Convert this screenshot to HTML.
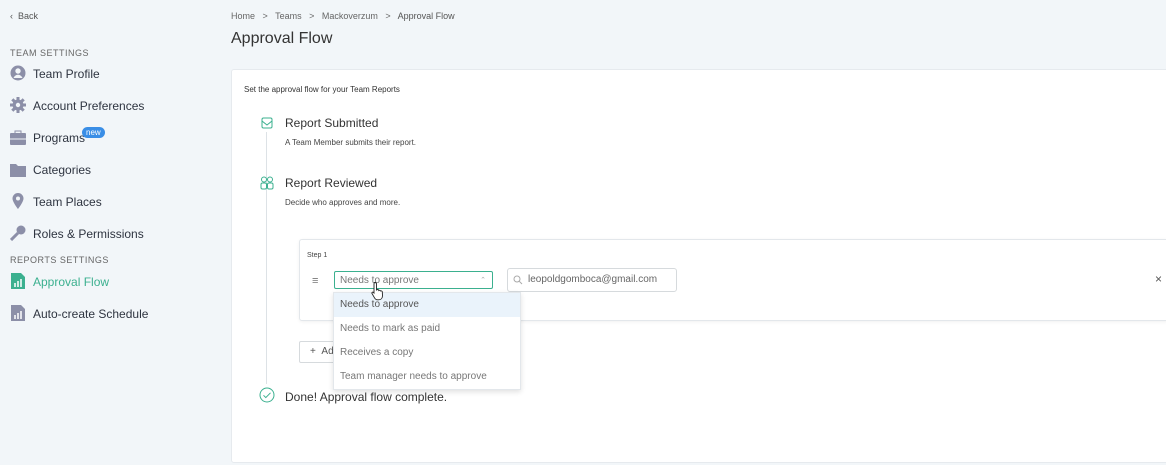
<!DOCTYPE html>
<html><head><style>
*{margin:0;padding:0;box-sizing:border-box}
body{width:1166px;height:465px;background:#f2f6f9;font-family:"Liberation Sans",sans-serif;color:#333;position:relative;overflow:hidden}
.a{position:absolute;white-space:nowrap}
.nav{font-size:12px;color:#2e3440}
.ic{position:absolute;left:10px;width:16px;height:16px}
.sec{font-size:9px;color:#666;letter-spacing:.5px}
.card{position:absolute;left:231px;top:69px;width:940px;height:394px;background:#fff;border:1px solid #e6eaee;border-radius:3px}
.step{position:absolute;left:299px;top:239px;width:870px;height:82px;background:#fff;border:1px solid #e3e7eb;border-radius:3px;box-shadow:0 1px 3px rgba(0,0,0,.06)}
.dd{position:absolute;left:333px;top:292px;width:188px;height:98px;background:#fff;border:1px solid #e3e7eb;box-shadow:0 2px 5px rgba(0,0,0,.12);font-size:10px;color:#777}
.dd div{height:24px;line-height:24px;padding-left:6px}
</style></head><body>
<div class="a" style="left:10px;top:11px;font-size:9px;color:#555">&lsaquo;&nbsp; Back</div>
<div class="a sec" style="left:10px;top:48px">TEAM SETTINGS</div>
<svg class="ic" style="top:65px" viewBox="0 0 16 16"><circle cx="8" cy="8" r="7.5" fill="#8c8fa8"/><circle cx="8" cy="6" r="2.7" fill="#f2f6f9"/><path d="M3.5 13c1-2.5 3-3.3 4.5-3.3s3.5.8 4.5 3.3" fill="#f2f6f9"/></svg>
<div class="a nav" style="left:33px;top:67px">Team Profile</div>
<svg class="ic" style="top:97px" viewBox="0 0 16 16"><circle cx="8" cy="8" r="5.5" fill="#8c8fa8"/><g stroke="#8c8fa8" stroke-width="3"><path d="M8 0v16M0 8h16M2.3 2.3l11.4 11.4M13.7 2.3L2.3 13.7"/></g><circle cx="8" cy="8" r="2.2" fill="#f2f6f9"/></svg>
<div class="a nav" style="left:33px;top:99px">Account Preferences</div>
<svg class="ic" style="top:130px" viewBox="0 0 16 16"><rect x="0" y="3" width="16" height="12" rx="1" fill="#8c8fa8"/><rect x="5" y="1" width="6" height="3" fill="none" stroke="#8c8fa8"/><path d="M0 9h16" stroke="#f2f6f9"/></svg>
<div class="a nav" style="left:33px;top:131px">Programs</div>
<div class="a" style="left:82px;top:127px;background:#3a8ee6;color:#fff;font-size:8px;border-radius:7px;padding:1px 4px">new</div>
<svg class="ic" style="top:162px" viewBox="0 0 16 16"><path d="M0 2h6l2 2h8v11H0z" fill="#8c8fa8"/></svg>
<div class="a nav" style="left:33px;top:163px">Categories</div>
<svg class="ic" style="top:193px" viewBox="0 0 16 16"><path d="M8 0a5.5 5.5 0 0 1 5.5 5.5C13.5 9 8 16 8 16S2.5 9 2.5 5.5A5.5 5.5 0 0 1 8 0z" fill="#8c8fa8"/><circle cx="8" cy="5.5" r="2" fill="#f2f6f9"/></svg>
<div class="a nav" style="left:33px;top:195px">Team Places</div>
<svg class="ic" style="top:225px" viewBox="0 0 16 16"><circle cx="11" cy="5" r="4.5" fill="#8c8fa8"/><path d="M8 8L1 15" stroke="#8c8fa8" stroke-width="3"/></svg>
<div class="a nav" style="left:33px;top:227px">Roles &amp; Permissions</div>
<div class="a sec" style="left:10px;top:255px">REPORTS SETTINGS</div>
<svg class="ic" style="top:273px" viewBox="0 0 16 16"><path d="M1 0h10l4 4v12H1z" fill="#3bb08f"/><path d="M5 14V10M8 14V8M11 14V6" stroke="#fff" stroke-width="1.5"/></svg>
<div class="a nav" style="left:33px;top:275px;color:#3bb08f">Approval Flow</div>
<svg class="ic" style="top:305px" viewBox="0 0 16 16"><path d="M1 0h10l4 4v12H1z" fill="#8c8fa8"/><path d="M5 14V10M8 14V8M11 14V6" stroke="#fff" stroke-width="1.5"/></svg>
<div class="a nav" style="left:33px;top:307px">Auto-create Schedule</div>

<div class="a" style="left:231px;top:11px;font-size:9px;color:#666">Home &nbsp;&nbsp;&gt;&nbsp;&nbsp; Teams &nbsp;&nbsp;&gt;&nbsp;&nbsp; Mackoverzum &nbsp;&nbsp;&gt;&nbsp;&nbsp; <span style="color:#555">Approval Flow</span></div>
<div class="a" style="left:231px;top:30px;font-size:16px;color:#333">Approval Flow</div>
<div class="card"></div>
<div class="a" style="left:244px;top:85px;font-size:8px;color:#333">Set the approval flow for your Team Reports</div>
<div class="a" style="left:266px;top:132px;width:1px;height:252px;background:#dde2e6"></div>
<svg class="a" style="left:261px;top:117px" width="12" height="12" viewBox="0 0 12 12"><rect x="1" y="1" width="10" height="10" rx="1.5" fill="#fff" stroke="#3bb08f"/><path d="M1 4l5 4 5-4" fill="none" stroke="#3bb08f"/></svg>
<div class="a" style="left:285px;top:116px;font-size:12px;color:#333">Report Submitted</div>
<div class="a" style="left:285px;top:138px;font-size:8px;color:#444">A Team Member submits their report.</div>
<svg class="a" style="left:260px;top:176px" width="14" height="14" viewBox="0 0 14 14" fill="#fff" stroke="#3bb08f"><circle cx="4" cy="3.5" r="2.5"/><circle cx="10" cy="3.5" r="2.5"/><rect x="1" y="7" width="5.5" height="6" rx="1.5"/><rect x="7.5" y="7" width="5.5" height="6" rx="1.5"/></svg>
<div class="a" style="left:285px;top:176px;font-size:12px;color:#333">Report Reviewed</div>
<div class="a" style="left:285px;top:198px;font-size:8px;color:#444">Decide who approves and more.</div>
<div class="step"></div>
<div class="a" style="left:307px;top:252px;font-size:7px;color:#444">Step 1</div>
<div class="a" style="left:312px;top:275px;font-size:11px;color:#777">&#8801;</div>
<div class="a" style="left:334px;top:271px;width:159px;height:18px;border:1px solid #3bb08f;border-radius:2px;font-size:10px;color:#777;line-height:18px;padding-left:5px">Needs to approve<span style="position:absolute;right:6px;font-size:7px;color:#aaa">&#8963;</span></div>
<div class="a" style="left:507px;top:268px;width:170px;height:24px;border:1px solid #d6dadd;border-radius:3px;font-size:10px;color:#666;line-height:22px;padding-left:20px"><svg style="position:absolute;left:5px;top:6px" width="10" height="10" viewBox="0 0 10 10" fill="none" stroke="#aaa"><circle cx="4" cy="4" r="3"/><path d="M6.2 6.2L9 9"/></svg>leopoldgomboca@gmail.com</div>
<div class="a" style="left:1155px;top:272px;font-size:12px;color:#555">&times;</div>
<div class="a" style="left:299px;top:341px;width:50px;height:22px;border:1px solid #d6dadd;border-radius:2px;background:#fff;font-size:10px;color:#555;line-height:20px;padding-left:10px">+ &nbsp;Ad</div>
<div class="dd"><div style="background:#eaf3fb;color:#555">Needs to approve</div><div>Needs to mark as paid</div><div>Receives a copy</div><div>Team manager needs to approve</div></div>
<svg class="a" style="left:371px;top:281px" width="16" height="20" viewBox="0 0 16 20"><path d="M4 1.5c1 0 1.5.6 1.5 1.5v6l1-.5c.8 0 1.2.4 1.3 1 .5-.4 1.5-.3 1.8.5.6-.3 1.6 0 1.7.8l.2 4c0 2.5-1.6 4-4 4H6.5c-1.5 0-2.3-.8-3-2L1 12.5c-.5-.9.6-1.8 1.4-1.1L3 12V3c0-.9.4-1.5 1-1.5z" fill="#fff" stroke="#222" stroke-width=".9"/></svg>
<svg class="a" style="left:259px;top:387px" width="16" height="16" viewBox="0 0 16 16" fill="none" stroke="#3bb08f"><circle cx="8" cy="8" r="7"/><path d="M4.5 8.3l2.3 2.3 4.7-4.8"/></svg>
<div class="a" style="left:285px;top:390px;font-size:12px;color:#333">Done! Approval flow complete.</div>
</body></html>
